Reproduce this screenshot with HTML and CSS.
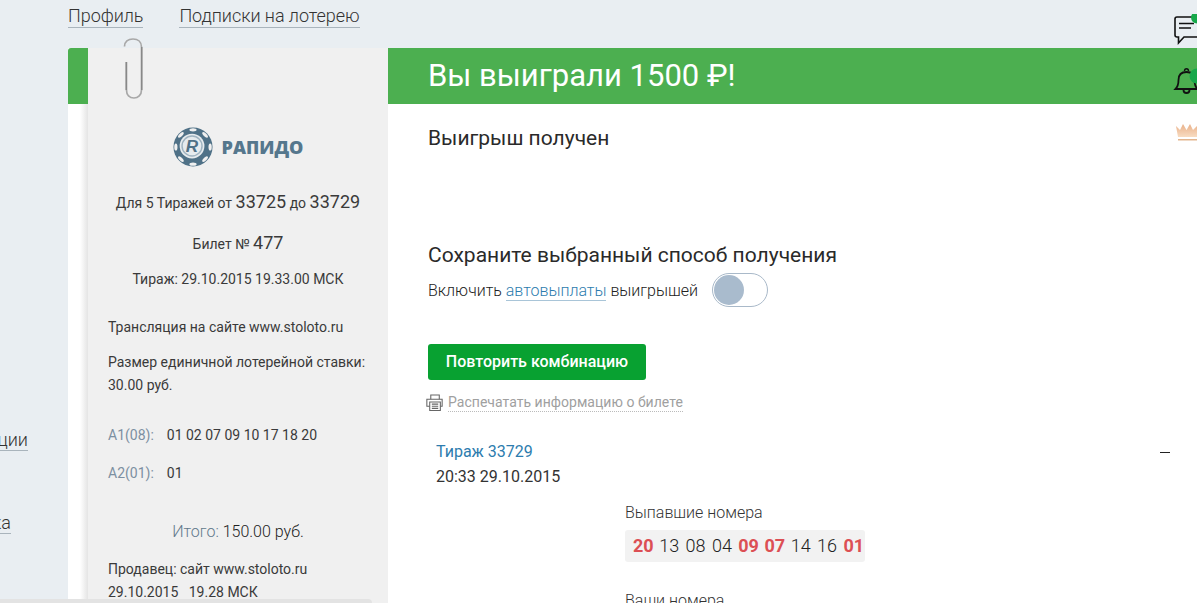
FILE: index.html
```html
<!DOCTYPE html>
<html lang="ru">
<head>
<meta charset="utf-8">
<title>Рапидо</title>
<link rel="stylesheet" href="styles.css">
</head>
<body>
<div class="page">
  <aside class="side">
    <a class="side-link side-link-a">Акции</a>
    <a class="side-link side-link-b">Справка</a>
  </aside>
  <div class="content">
    <nav class="tabs">
      <a class="tab">Профиль</a>
      <a class="tab">Подписки на лотерею</a>
    </nav>
    <section class="card">
      <div class="gutter"><div class="gutter-green"></div></div>
      <article class="ticket">
        <div class="logo">
          <svg class="chip" width="40" height="40" viewBox="0 0 42 42">
            <circle cx="21" cy="21" r="20.500" fill="#4f7187"/>
            <g fill="#f0f0f0">
              <ellipse cx="21" cy="3" rx="3.800" ry="1.700"/>
              <ellipse cx="21" cy="39" rx="3.800" ry="1.700"/>
              <ellipse cx="3" cy="21" rx="1.700" ry="3.800"/>
              <ellipse cx="39" cy="21" rx="1.700" ry="3.800"/>
              <ellipse cx="8.300" cy="8.300" rx="3.800" ry="1.700" transform="rotate(-45 8.300 8.300)"/>
              <ellipse cx="33.700" cy="8.300" rx="3.800" ry="1.700" transform="rotate(45 33.700 8.300)"/>
              <ellipse cx="8.300" cy="33.700" rx="3.800" ry="1.700" transform="rotate(45 8.300 33.700)"/>
              <ellipse cx="33.700" cy="33.700" rx="3.800" ry="1.700" transform="rotate(-45 33.700 33.700)"/>
            </g>
            <circle cx="20" cy="20" r="13" fill="#e6ebee"/>
            <circle cx="20" cy="20" r="10.500" fill="none" stroke="#9fb3c0" stroke-width="1.500"/>
            <text x="20" y="26.500" text-anchor="middle" class="chip-r">R</text>
          </svg>
          <span class="logo-name">РАПИДО</span>
        </div>
        <p class="t-line t-draws">Для 5 Тиражей от <b class="big">33725</b> до <b class="big">33729</b></p>
        <p class="t-line t-num">Билет № <b class="big">477</b></p>
        <p class="t-line t-date">Тираж: 29.10.2015 19.33.00 МСК</p>
        <p class="t-text t-live">Трансляция на сайте www.stoloto.ru</p>
        <p class="t-text t-rate">Размер единичной лотерейной ставки: 30.00 руб.</p>
        <div class="combo combo-a"><span class="combo-k">A1(08):</span><span>01 02 07 09 10 17 18 20</span></div>
        <div class="combo combo-b"><span class="combo-k">A2(01):</span><span>01</span></div>
        <p class="total"><span class="total-k">Итого:</span> 150.00 руб.</p>
        <p class="t-text t-seller">Продавец: сайт www.stoloto.ru<br>29.10.2015 &nbsp; 19.28 МСК</p>
      </article>
      <div class="main">
        <header class="banner">Вы выиграли 1500 ₽!</header>
        <div class="body">
          <h2 class="h-status">Выигрыш получен</h2>
          <h2 class="h-save">Сохраните выбранный способ получения</h2>
          <div class="auto">
            <span>Включить <a class="auto-link">автовыплаты</a> выигрышей</span>
            <span class="toggle"><span class="knob"></span></span>
          </div>
          <button class="repeat" type="button">Повторить комбинацию</button>
          <div class="print">
            <svg width="17" height="17" viewBox="0 0 16 16" fill="none" stroke="#666" stroke-width="1">
              <path d="M4.500 5V1h8v4"/>
              <path d="M3.500 11.500H.8V5h14.400v6.500H13.500"/>
              <path d="M3.500 7.500h10v8h-10z"/>
              <path d="M5.500 9.500h6M5.500 11.500h6M5.500 13.500h6"/>
            </svg>
            <a class="print-link">Распечатать информацию о билете</a>
          </div>
          <div class="draw">
            <div class="draw-head">
              <div>
                <a class="draw-link">Тираж 33729</a>
                <div class="draw-date">20:33 29.10.2015</div>
              </div>
              <span class="dash"></span>
            </div>
            <div class="draw-nums">
              <div class="nums-title">Выпавшие номера</div>
              <div class="nums">
                <b class="hit">20</b><span>13</span><span>08</span><span>04</span><b class="hit">09</b><b class="hit">07</b><span>14</span><span>16</span><b class="hit">01</b>
              </div>
              <div class="nums-title nums-yours">Ваши номера</div>
            </div>
          </div>
        </div>
      </div>
    </section>
  </div>

  <svg class="clip" width="22" height="62" viewBox="0 0 22 62" fill="none">
    <path d="M2.500 8.500C2.500 3.500 6 1 11 1c5 0 8.500 3 8.500 8v43c0 5-3.500 8-7.500 8-4.500 0-7.500-3-7.500-8V24" stroke="#a8a8a8" stroke-width="1.700"/>
    <path d="M19.900 9v43M4.100 24v28" stroke="#666" stroke-width=".8"/>
  </svg>

  <div class="floaters">
    <svg class="fl fl-chat" width="30" height="32" viewBox="0 0 30 32" fill="none" stroke="#111" stroke-width="1.600">
      <path d="M4 3h22a2 2 0 0 1 2 2v16a2 2 0 0 1-2 2H11l-5.500 6v-6H4a2 2 0 0 1-2-2V5a2 2 0 0 1 2-2z"/>
      <path d="M6 9.500h15M6 14h12" stroke-width="1.300"/>
      <circle cx="24" cy="3.500" r="6" fill="#16a84a" stroke="none"/>
    </svg>
    <svg class="fl fl-bell" width="26" height="32" viewBox="0 0 26 32" fill="none" stroke="#111" stroke-width="1.800">
      <path d="M2.500 25c2-2 3-4 3-9 0-5 3-8 8-8s8 3 8 8c0 5 1 7 3 9z"/>
      <path d="M11.500 7c0-3 4-3 4 0" stroke-width="1.400"/>
      <path d="M10.500 26c0 4 6 4 6 0"/>
      <circle cx="24" cy="12" r="7.500" fill="#16a84a" stroke="none"/>
    </svg>
    <svg class="fl fl-crown" width="22" height="22" viewBox="0 0 22 22">
      <defs>
        <linearGradient id="crown-fill" x1="0" y1="0" x2="0" y2="1">
          <stop offset="0" stop-color="#e9b088"/>
          <stop offset="1" stop-color="#f8dcc2"/>
        </linearGradient>
      </defs>
      <path d="M1 5l4 4 3-6 3.500 6L15 3l3 6 4-4v11H3z" fill="url(#crown-fill)"/>
      <path d="M3 18h19v1.500H3z" fill="#e2b48c"/>
    </svg>
  </div>

  <div class="hscroll"></div>
</div>
</body>
</html>
```
FILE: styles.css
```css
* { box-sizing: border-box; }
html, body { margin: 0; height: 100%; overflow: hidden; }
body { font-family: Roboto, "Liberation Sans", sans-serif; color: #222; background: #e9eef2; }
p, h2 { margin: 0; }
a { color: inherit; }

.page { position: relative; display: flex; width: 1197px; height: 603px; overflow: hidden; }

.side { flex: 0 0 68px; width: 68px; display: flex; flex-direction: column; align-items: flex-end; padding: 429px 40px 0 0; font-size: 18px; font-weight: 300; overflow: hidden; }
.side-link { display: block; flex: none; white-space: nowrap; line-height: 21px; border-bottom: 1px solid #a9b4bc; color: #333; }
.side-link-a { width: 60px; text-align: right; }
.side-link-b { width: 70px; text-align: right; margin: 61px 17px 0 0; direction: rtl; }

.content { flex: 1; min-width: 0; display: flex; flex-direction: column; }
.tabs { height: 48px; display: flex; gap: 36px; padding-top: 5px; font-size: 18px; font-weight: 300; color: #333; letter-spacing: -.05px; }
.tab { height: 23px; line-height: 21px; border-bottom: 1px solid #a9b4bc; }

.card { flex: 1; display: flex; min-height: 0; background: #fff; border-radius: 3px 0 0 0; }
.gutter { flex: 0 0 20px; background: linear-gradient(to right, #fff 60%, #e4e4e4); }
.gutter-green { height: 56px; background: #4caf50; border-radius: 3px 0 0 0; }

.ticket { flex: 0 0 300px; height: 560px; background: #f0f0f0; padding: 79px 20px 0; font-size: 14px; color: #3a3a3a; }
.logo { display: flex; align-items: center; justify-content: center; gap: 9px; height: 40px; }
.chip { flex: none; }
.chip-r { font: italic 700 18px "Liberation Sans", sans-serif; fill: #4f7187; }
.logo-name { font-family: "Open Sans", sans-serif; font-weight: 800; font-size: 18px; color: #55778d; }
.big { font-size: 18px; font-weight: 400; }
.t-line { text-align: center; white-space: nowrap; }
.t-draws { margin-top: 23px; line-height: 24px; }
.t-num { margin-top: 16px; line-height: 24px; }
.t-date { margin-top: 13px; line-height: 20px; }
.t-text { line-height: 23px; }
.t-live { margin-top: 27px; }
.t-rate { margin-top: 12px; }
.combo { display: flex; gap: 13px; line-height: 20px; }
.combo-a { margin-top: 28px; }
.combo-b { margin-top: 18px; }
.combo-k { color: #7c8fa1; }
.total { margin-top: 37px; text-align: center; font-size: 16px; line-height: 24px; font-weight: 300; color: #222; }
.total-k { color: #62798c; }
.t-seller { margin-top: 14px; }

.main { flex: 1; min-width: 0; display: flex; flex-direction: column; }
.banner { flex: 0 0 56px; background: #4caf50; color: #fff; font-size: 31px; line-height: 56px; padding-left: 40px; }
.body { flex: 1; padding: 0 27px 0 40px; background: #fff; }
.h-status, .h-save { font-size: 21px; font-weight: 400; line-height: 24px; color: #2a2a2a; }
.h-status { margin-top: 22px; }
.h-save { margin-top: 93px; }

.auto { display: flex; align-items: center; gap: 14px; margin-top: 6px; height: 34px; font-size: 16px; font-weight: 300; }
.auto-link { color: #2d7cae; border-bottom: 1px solid #a9c5d8; }
.toggle { display: block; width: 56px; height: 34px; border: 1px solid #a9b9c9; border-radius: 17px; padding: 1px; background: #fff; }
.knob { display: block; width: 30px; height: 30px; border-radius: 50%; background: #a9bbcd; }

.repeat { display: block; margin-top: 37px; width: 218px; height: 36px; border: 0; border-radius: 3px; background: #08a131; color: #fff; font: 500 16px/36px Roboto, sans-serif; padding: 0; }

.print { display: flex; align-items: center; gap: 5px; margin-top: 12px; height: 20px; margin-left: -2px; font-size: 14px; color: #a0a0a0; letter-spacing: .03px; }
.print-link { border-bottom: 1px dotted #bbb; line-height: 18px; }

.draw { margin-top: 28px; padding-left: 8px; }
.draw-head { display: flex; justify-content: space-between; align-items: flex-start; font-size: 16px; font-weight: 300; line-height: 24px; }
.draw-link { color: #2d7cae; font-weight: 400; }
.draw-date { margin-top: 1px; font-weight: 400; color: #333; }
.dash { width: 10px; height: 1px; background: #222; margin-top: 12px; }
.draw-nums { margin: 12px 0 0 189px; }
.nums-title { font-size: 16px; line-height: 24px; color: #333; font-weight: 300; }
.nums { display: flex; gap: 6px; width: 240px; height: 32px; margin-top: 5px; padding: 0 0 2px 8px; align-items: center; background: #f2f2f2; border-radius: 3px; font-size: 18px; font-weight: 300; color: #222; }
.nums span, .nums b { width: 20.300px; }
.hit { color: #dc4f54; font-weight: 700; }
.nums-yours { margin-top: 27px; }

.clip { position: absolute; left: 122px; top: 38px; }
.floaters { position: absolute; left: 1173px; top: 14px; width: 24px; display: flex; flex-direction: column; align-items: flex-start; overflow: hidden; height: 140px; }
.fl { flex: none; }
.fl-bell { margin-top: 18px; }
.fl-crown { margin: 25px 0 0 2px; }

.hscroll { position: absolute; left: 0; bottom: 0; width: 372px; height: 4px; background: #e3e3e3; border-radius: 0 4px 0 0; }
```
